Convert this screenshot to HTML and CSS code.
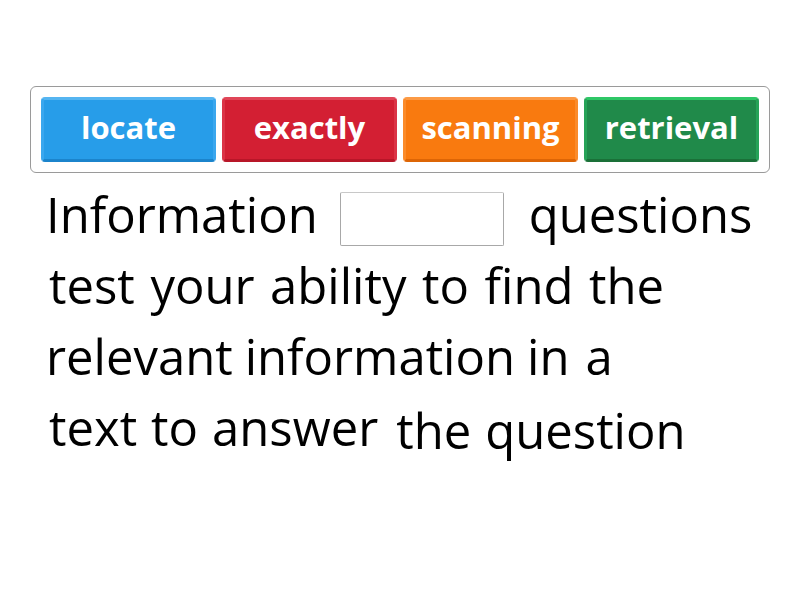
FILE: index.html
```html
<!DOCTYPE html>
<html>
<head>
<meta charset="utf-8">
<link rel="stylesheet" href="styles.css">
</head>
<body>
<div class="bank">
  <div class="tile blue">locate</div>
  <div class="tile red">exactly</div>
  <div class="tile orange">scanning</div>
  <div class="tile green">retrieval</div>
</div>
<div class="passage">
  <div class="line l1"><span class="w">Information</span><span class="blank"></span><span class="w after">questions</span></div>
  <div class="line l2"><span class="w">test</span><span class="w">your</span><span class="w">ability</span><span class="w">to</span><span class="w">find</span><span class="w">the</span></div>
  <div class="line l3"><span class="w">relevant</span><span class="w">information</span><span class="w">in</span><span class="w wide">a</span></div>
  <div class="line l4"><span class="w">text</span><span class="w">to</span><span class="w">answer</span><span class="w low wide">the</span><span class="w low">question</span></div>
</div>
</body>
</html>
```

FILE: styles.css
```css
html, body {
  margin: 0;
  padding: 0;
  background: #fff;
}
body {
  font-family: "Open Sans", "Noto Sans", sans-serif;
  width: 800px;
  height: 600px;
  overflow: hidden;
}
.bank {
  box-sizing: border-box;
  margin: 86px 0 0 30px;
  width: 740px;
  height: 87px;
  border: 1px solid #9a9a9a;
  border-radius: 6px;
  padding: 10px;
  display: flex;
  gap: 6px;
}
.tile {
  box-sizing: border-box;
  width: 175px;
  height: 65px;
  border-radius: 4px;
  color: #fff;
  font-weight: 700;
  font-size: 31px;
  display: flex;
  align-items: center;
  justify-content: center;
  padding-bottom: 6px;
  border: 3px solid transparent;
}
.blue {
  background: #279de9;
  border-color: #55b5f1 #3aa7ee #1b84cc #3aa7ee;
}
.red {
  background: #d31f33;
  border-color: #e04658 #db3346 #b81628 #db3346;
}
.orange {
  background: #f97a0f;
  border-color: #fc9a45 #fb8b2a #dd6505 #fb8b2a;
}
.green {
  background: #208a4a;
  border-color: #2ec766 #26a358 #1a7038 #26a358;
}
.passage {
  margin-top: 6px;
  color: #000;
  font-size: 49px;
}
.line {
  display: flex;
  align-items: center;
  height: 71px;
  line-height: 71px;
}
.l1 { padding-left: 46px; gap: 23px; }
.l2 { padding-left: 49px; gap: 15.6px; }
.l3 { padding-left: 46px; gap: 12px; }
.l4 { padding-left: 49px; gap: 14px; }
.after { margin-left: 2px; }
.wide { margin-left: 4px; }
.low { position: relative; top: 3px; }
.blank {
  box-sizing: border-box;
  width: 164px;
  height: 54px;
  margin-top: 8px;
  margin-left: -1px;
  border: 1px solid #a8a8a8;
  border-top-color: #c8c8c8;
  border-radius: 2px;
}
```
